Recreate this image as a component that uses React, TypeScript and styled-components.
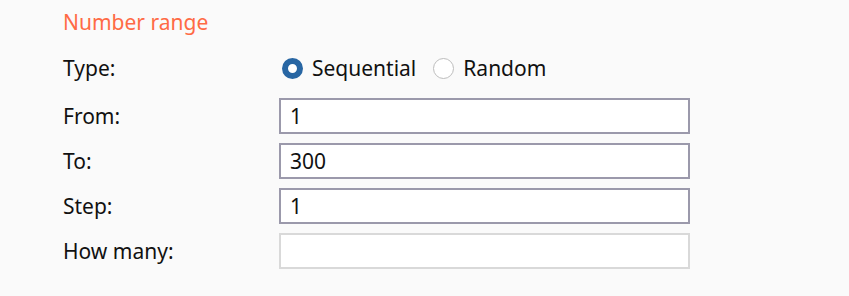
import React from "react";
import styled, { createGlobalStyle } from "styled-components";

const Global = createGlobalStyle`
  html, body { margin: 0; padding: 0; background: #fafafa; }
  body { font-family: "Noto Sans", "Open Sans", sans-serif; color: #111; }
`;

const Page = styled.div`
  padding: 8px 0 0 63px;
`;

const Title = styled.div`
  color: #ff6a45;
  font-size: 21px;
  line-height: 28px;
  margin-bottom: 11px;
`;

const Form = styled.div`
  display: grid;
  grid-template-columns: 216px 411px;
  grid-template-rows: 42px repeat(4, 36px);
  row-gap: 9px;
  align-items: center;
`;

const Label = styled.div`
  font-size: 21px;
`;

const RadioGroup = styled.div`
  display: flex;
  align-items: center;
  gap: 17px;
  padding-left: 3px;
`;

const RadioOption = styled.label`
  display: flex;
  align-items: center;
  gap: 9px;
  font-size: 21px;
`;

const RadioDot = styled.span<{ $checked?: boolean }>`
  box-sizing: border-box;
  width: 21px;
  height: 21px;
  border-radius: 50%;
  background: #fff;
  border: ${(p) => (p.$checked ? "6px solid #2866a3" : "1.5px solid #bdbdbd")};
`;

const Input = styled.div<{ $disabled?: boolean }>`
  box-sizing: border-box;
  height: 36px;
  border: 2px solid ${(p) => (p.$disabled ? "#d9d9d9" : "#9b99ab")};
  background: #fff;
  padding-left: 9px;
  display: flex;
  align-items: center;
  font-size: 21px;
`;

export default function App() {
  return (
    <>
      <Global />
      <Page>
        <Title>Number range</Title>
        <Form>
          <Label>Type:</Label>
          <RadioGroup>
            <RadioOption>
              <RadioDot $checked />
              Sequential
            </RadioOption>
            <RadioOption>
              <RadioDot />
              Random
            </RadioOption>
          </RadioGroup>
          <Label>From:</Label>
          <Input>1</Input>
          <Label>To:</Label>
          <Input>300</Input>
          <Label>Step:</Label>
          <Input>1</Input>
          <Label>How many:</Label>
          <Input $disabled />
        </Form>
      </Page>
    </>
  );
}
